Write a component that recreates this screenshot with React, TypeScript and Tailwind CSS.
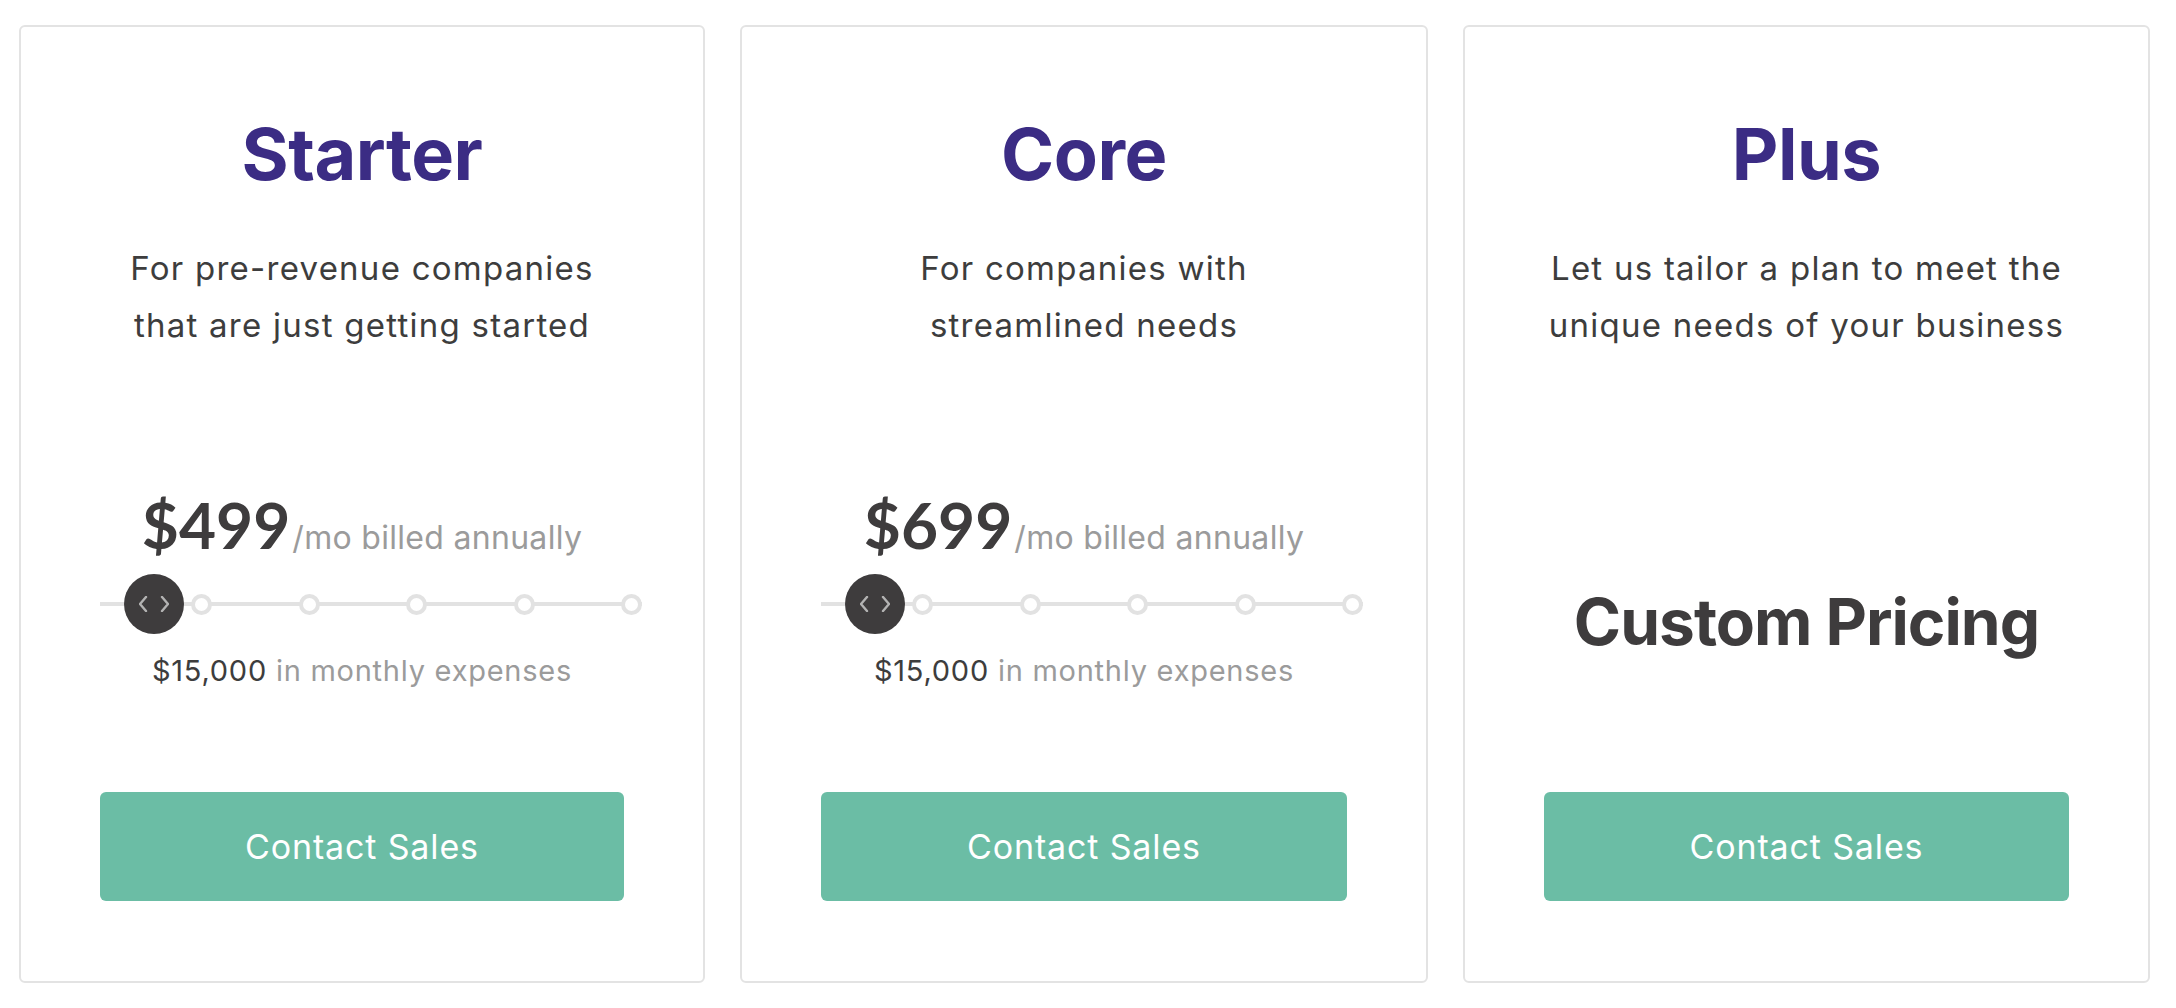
import React from "react";

const font = { fontFamily: "Inter, 'Noto Sans', sans-serif" };

function Chevrons() {
  return (
    <svg width="30" height="16" viewBox="0 0 30 16" fill="none">
      <polyline points="7,1 1,8 7,15" stroke="#b3b3b3" strokeWidth="2.4" strokeLinecap="round" strokeLinejoin="round" />
      <polyline points="23,1 29,8 23,15" stroke="#b3b3b3" strokeWidth="2.4" strokeLinecap="round" strokeLinejoin="round" />
    </svg>
  );
}

function Slider() {
  return (
    <div className="relative self-start w-[542px] h-[60px] mt-[17px]">
      <div className="absolute left-0 right-0 top-[28px] h-[4px] bg-[#e2e2e2]" />
      <div className="relative flex h-full items-center pl-[91px] gap-[86.5px]">
        {[0, 1, 2, 3, 4].map((i) => (
          <div key={i} className="w-[21px] h-[21px] rounded-full border-4 border-[#e2e2e2] bg-white" />
        ))}
      </div>
      <div className="absolute left-[24px] top-0 w-[60px] h-[60px] rounded-full bg-[#3e3c3d] flex items-center justify-center">
        <Chevrons />
      </div>
    </div>
  );
}

type Plan = {
  name: string;
  desc: [string, string];
  price?: string;
};

function Card({ plan }: { plan: Plan }) {
  return (
    <div className="flex flex-col items-center h-[958px] border-2 border-[#e3e3e3] rounded-[6px] bg-white px-[79px] pt-[91px]">
      <h2 className="text-[72px] leading-none font-bold text-[#3b2c84] h-[72px] tracking-[-0.5px]">{plan.name}</h2>
      <p className="mt-[50px] text-[33px] leading-[57px] text-[#3d3d3d] text-center h-[114px] tracking-[1.25px] whitespace-nowrap">
        {plan.desc[0]}
        <br />
        {plan.desc[1]}
      </p>
      <div className="flex flex-col items-center w-full h-[438px]">
        {plan.price ? (
          <>
            <div className="mt-[139px] flex items-baseline h-[64px]">
              <span className="text-[64px] leading-none font-bold text-[#3e3c3d]" style={{ fontFamily: "Lato, sans-serif" }}>{plan.price}</span>
              <span className="text-[32px] leading-none text-[#9b9b9b] ml-[2px] tracking-[0.3px]">/mo billed annually</span>
            </div>
            <Slider />
            <div className="mt-[22px] text-[29px] leading-none h-[30px] tracking-[0.75px]">
              <span className="text-[#3d3d3d]">$15,000</span>
              <span className="text-[#9b9b9b]"> in monthly expenses</span>
            </div>
          </>
        ) : (
          <div className="mt-[236px] text-[64px] leading-none font-bold text-[#3e3c3d] tracking-[-1px]">Custom Pricing</div>
        )}
      </div>
      <button className="w-full h-[109px] rounded-[6px] bg-[#6bbda5] text-white text-[34px] tracking-[0.85px]">Contact Sales</button>
    </div>
  );
}

export default function App() {
  const plans: Plan[] = [
    { name: "Starter", desc: ["For pre-revenue companies", "that are just getting started"], price: "$499" },
    { name: "Core", desc: ["For companies with", "streamlined needs"], price: "$699" },
    { name: "Plus", desc: ["Let us tailor a plan to meet the", "unique needs of your business"] },
  ];
  return (
    <div style={font} className="w-[2176px] h-[1008px] bg-white pt-[25px] pl-[19px]">
      <div className="grid grid-cols-[686px_688px_687px] gap-x-[35px]">
        {plans.map((p) => (
          <Card key={p.name} plan={p} />
        ))}
      </div>
    </div>
  );
}
